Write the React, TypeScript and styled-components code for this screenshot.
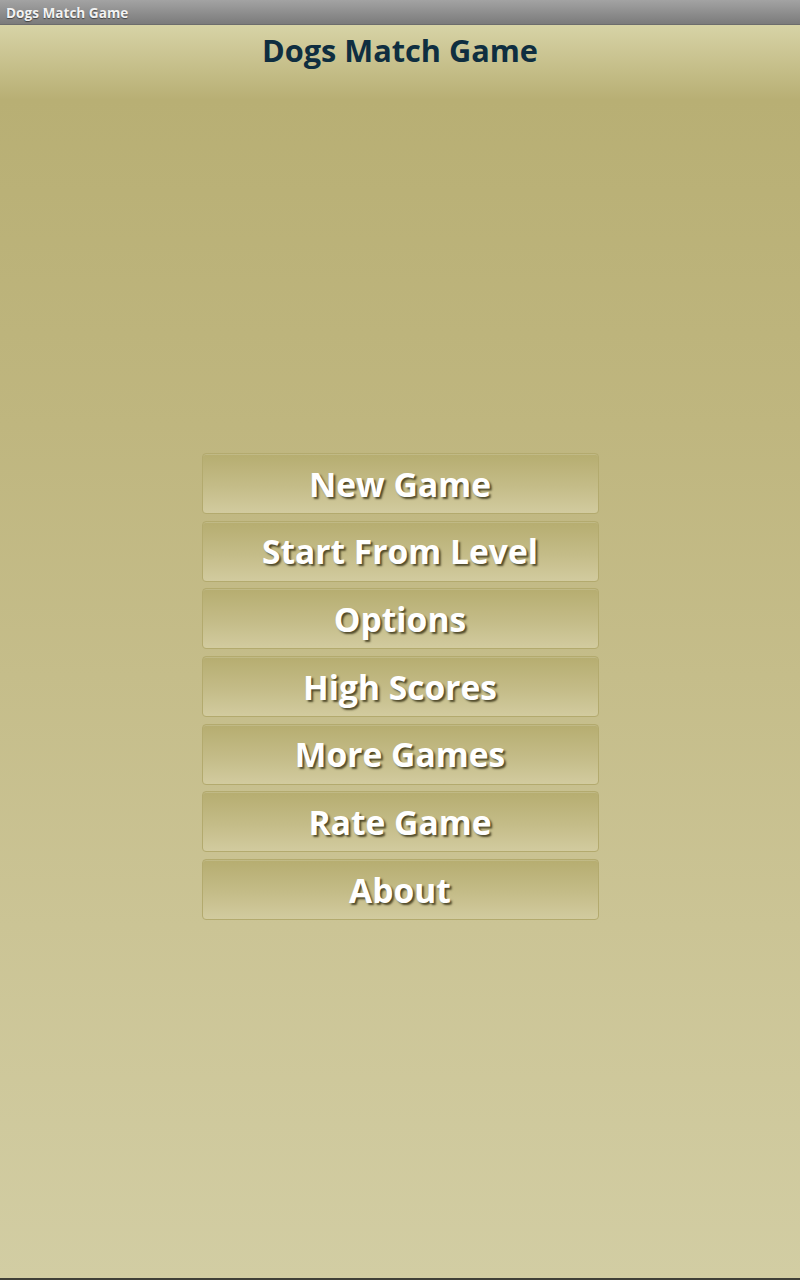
import React from 'react';
import styled, { createGlobalStyle } from 'styled-components';

const GlobalStyle = createGlobalStyle`
  html, body {
    margin: 0;
    padding: 0;
    background: #3f3f37;
  }
  #root {
    height: 1280px;
  }
`;

const Screen = styled.div`
  width: 800px;
  height: 1278px;
  display: flex;
  flex-direction: column;
  font-family: "Open Sans", "DejaVu Sans", sans-serif;
`;

const StatusBar = styled.div`
  height: 25px;
  flex: none;
  display: flex;
  align-items: center;
  padding-left: 6px;
  background: linear-gradient(#a3a3a3, #7b7b7b);
  border-bottom: 1px solid #6c6c6c;
  box-sizing: border-box;
  color: #f2f2f2;
  font-size: 13.6px;
  font-weight: 700;
  text-shadow: 0 1px 1px rgba(0, 0, 0, 0.5);
`;

const Body = styled.div`
  flex: 1;
  display: flex;
  flex-direction: column;
  align-items: center;
  background: linear-gradient(
    #d7d3a6 0px,
    #b8af74 75px,
    #bfb67f 400px,
    #cbc495 900px,
    #d2cda3 1253px
  );
`;

const Title = styled.h1`
  margin: 0;
  height: 428px;
  padding-top: 5px;
  box-sizing: border-box;
  color: #0f2e40;
  font-size: 30.7px;
  font-weight: 700;
  line-height: 40px;
`;

const Menu = styled.nav`
  display: flex;
  flex-direction: column;
  gap: 6.7px;
  width: 397px;
`;

const MenuButton = styled.button`
  height: 61px;
  border: 1px solid #b3aa6e;
  border-radius: 4px;
  background: linear-gradient(#b6ad70, #c4bc88 55%, #d2cb9f);
  box-shadow: inset 0 1px 0 rgba(255, 255, 255, 0.15);
  color: #fff;
  font-family: inherit;
  font-size: 33.6px;
  font-weight: 700;
  padding: 0;
  text-shadow: 2px 2px 2px rgba(40, 35, 10, 0.75);
  cursor: pointer;
`;

const items = [
  'New Game',
  'Start From Level',
  'Options',
  'High Scores',
  'More Games',
  'Rate Game',
  'About',
];

export default function App() {
  return (
    <>
      <GlobalStyle />
      <Screen>
        <StatusBar>Dogs Match Game</StatusBar>
        <Body>
          <Title>Dogs Match Game</Title>
          <Menu>
            {items.map(label => (
              <MenuButton key={label}>{label}</MenuButton>
            ))}
          </Menu>
        </Body>
      </Screen>
    </>
  );
}
